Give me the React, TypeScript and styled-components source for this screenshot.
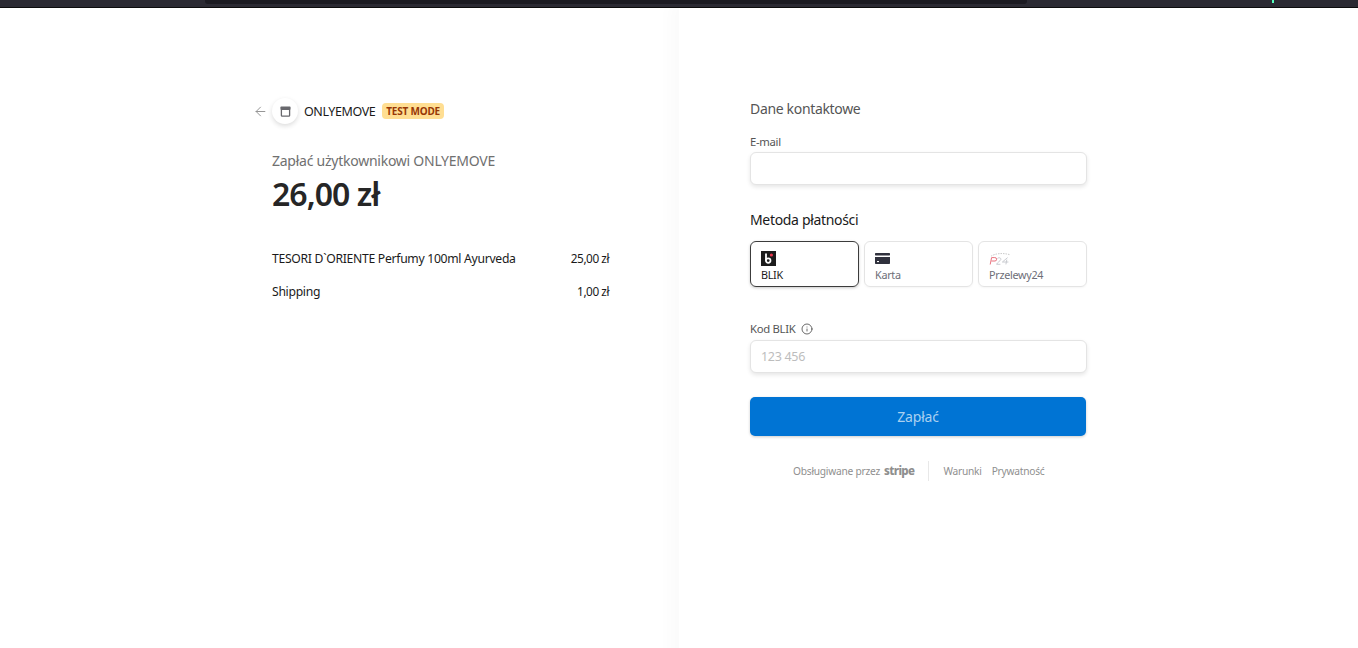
import styled, { createGlobalStyle } from "styled-components";
import { ArrowLeft, Info } from "lucide-react";

const GlobalStyle = createGlobalStyle`
    html, body {
        margin: 0;
        height: 100%;
        background: #fff;
        overflow: hidden;
    }
    * {
        box-sizing: border-box;
    }
    body {
        font-family: "Noto Sans", "Open Sans", sans-serif;
        color: #1a1a1a;
    }
`;

const Page = styled.div`
    width: 1358px;
    height: 648px;
    display: flex;
    flex-direction: column;
`;

const BrowserBar = styled.div`
    height: 8px;
    flex: none;
    background: #2b2a33;
    border-bottom: 1px solid #0c0c0d;
    display: flex;
    padding-left: 205px;
`;

const BrowserTab = styled.div`
    width: 822px;
    height: 4px;
    background: #1c1b22;
    border-radius: 0 0 3px 3px;
`;

const BrowserMark = styled.div`
    width: 2px;
    height: 3px;
    margin-left: 245px;
    background: #54ffbd;
`;

const Checkout = styled.main`
    flex: 1;
    display: grid;
    grid-template-columns: 679px 1fr;
    overflow: hidden;
`;

const Summary = styled.section`
    padding: 89px 0 0 254px;
`;

const Header = styled.header`
    display: flex;
    align-items: center;
    height: 28px;
`;

const BackIcon = styled(ArrowLeft)`
    width: 15px;
    height: 15px;
    margin-left: -1px;
    margin-right: 4px;
    color: #8f8f8f;
`;

const StoreBadge = styled.div`
    width: 26px;
    height: 26px;
    border-radius: 50%;
    background: #fff;
    box-shadow: 0 2px 5px rgba(0, 0, 0, 0.14);
    display: flex;
    align-items: center;
    justify-content: center;
    margin-right: 6px;
`;

const Merchant = styled.span`
    font-size: 12.5px;
    letter-spacing: -0.4px;
    color: #1a1a1a;
`;

const TestBadge = styled.span`
    margin-left: 7px;
    height: 16px;
    padding: 0 4px;
    border-radius: 4px;
    background: #ffde92;
    color: #983705;
    font-size: 10px;
    font-weight: 700;
    line-height: 16px;
    letter-spacing: -0.2px;
`;

const SummaryBody = styled.div`
    padding-left: 18px;
    width: 355px;
`;

const PayTo = styled.div`
    margin-top: 26px;
    font-size: 14px;
    line-height: 20px;
    letter-spacing: -0.25px;
    color: #707070;
`;

const Amount = styled.div`
    margin-top: 3px;
    font-size: 32px;
    font-weight: 600;
    line-height: 40px;
    letter-spacing: -0.95px;
    color: #262626;
`;

const Items = styled.ul`
    list-style: none;
    margin: 35px 0 0;
    padding: 0;
    display: flex;
    flex-direction: column;
    gap: 13px;
`;

const Item = styled.li`
    display: flex;
    justify-content: space-between;
    font-size: 12.2px;
    line-height: 20px;
    letter-spacing: -0.3px;
    color: #1a1a1a;
`;

const Price = styled.span`
    font-size: 11.8px;
    line-height: 19px;
    letter-spacing: -0.45px;
`;

const FormPane = styled.section`
    margin: -6px 0 -30px;
    padding: 97px 0 0 71px;
    background: #fff;
    box-shadow: -8px 0 16px rgba(0, 0, 0, 0.022);
`;

const Form = styled.form`
    width: 337px;
`;

const Heading = styled.h2<{ $dark?: boolean }>`
    margin: 0;
    font-size: 14px;
    font-weight: 400;
    line-height: 20px;
    letter-spacing: -0.33px;
    color: ${(p) => (p.$dark ? "#1a1a1a" : "#555")};
`;

const Label = styled.label`
    display: flex;
    align-items: center;
    gap: 6px;
    font-size: 11.3px;
    line-height: 16px;
    letter-spacing: -0.3px;
    color: #555;
`;

const ContactLabel = styled(Label)`
    margin-top: 15px;
`;

const Field = styled.div`
    margin-top: 2px;
    height: 33px;
    padding: 0 10px;
    border: 1px solid #e4e4e4;
    border-radius: 6px;
    background: #fff;
    box-shadow: 0 2px 4px rgba(0, 0, 0, 0.1);
    display: flex;
    align-items: center;
    font-size: 12.5px;
    letter-spacing: -0.3px;
    color: #bdbdbd;
`;

const MethodHeading = styled(Heading)`
    margin-top: 25px;
`;

const Methods = styled.div`
    margin-top: 11px;
    display: grid;
    grid-template-columns: repeat(3, 109px);
    gap: 5px;
`;

const Method = styled.div<{ $active?: boolean }>`
    height: 46px;
    padding: 9px 10px 0;
    border-radius: 6px;
    border: 1px solid ${(p) => (p.$active ? "#3c3c3c" : "#e4e4e4")};
    box-shadow: ${(p) => (p.$active ? "0 1px 3px rgba(0, 0, 0, 0.22)" : "0 1px 2px rgba(0, 0, 0, 0.04)")};
    font-size: 10.8px;
    line-height: 15px;
    letter-spacing: -0.3px;
    color: ${(p) => (p.$active ? "#1a1a1a" : "#6d6e78")};
    svg {
        display: block;
        margin-bottom: 1px;
    }
`;

const BlikLabel = styled(Label)`
    margin-top: 34px;
`;

const BlikField = styled(Field)`
    margin-top: 3px;
`;

const InfoIcon = styled(Info)`
    width: 12px;
    height: 12px;
    color: #444;
`;

const PayButton = styled.button`
    display: block;
    width: 336px;
    height: 39px;
    margin-top: 24px;
    border: 0;
    border-radius: 5px;
    background: #0074d4;
    box-shadow: 0 1px 3px rgba(0, 0, 0, 0.2);
    color: #a9d0f0;
    font-family: inherit;
    font-size: 14px;
    letter-spacing: -0.2px;
`;

const Footer = styled.footer`
    margin-top: 25px;
    padding-left: 43px;
    display: flex;
    align-items: center;
    font-size: 10.2px;
    letter-spacing: -0.24px;
    color: #8f8f8f;
`;

const Powered = styled.span`
    display: flex;
    align-items: baseline;
    gap: 4px;
    padding-right: 14px;
    border-right: 1px solid #e8e8e8;
    height: 20px;
    line-height: 20px;
`;

const StripeWord = styled.strong`
    font-size: 11.5px;
    font-weight: 800;
    letter-spacing: -0.6px;
    color: #8f8f8f;
`;

const FooterLink = styled.a`
    margin-left: 10px;
    &:first-of-type {
        margin-left: 14px;
    }
`;

const StoreLogo = () => (
    <svg width="11" height="11" viewBox="0 0 11 11">
        <rect x="0.4" y="0.6" width="10.2" height="3.4" rx="0.8" fill="#68686d" />
        <path d="M1.4 4v5.4a.8.8 0 0 0 .8.8h6.600a.8.8 0 0 0 .8-.8V4" fill="none" stroke="#68686d" strokeWidth="1.300" />
    </svg>
);

const BlikLogo = () => (
    <svg width="15" height="15" viewBox="0 0 15 15">
        <rect width="15" height="15" fill="#1c1c1c" />
        <circle cx="10.4" cy="4" r="1.6" fill="#e8374d" />
        <path d="M5 2.6v7.2" stroke="#fff" strokeWidth="1.8" />
        <circle cx="7.2" cy="9.6" r="2.3" fill="none" stroke="#fff" strokeWidth="1.7" />
    </svg>
);

const CardLogo = () => (
    <svg width="15" height="15" viewBox="0 0 15 15">
        <rect y="2" width="15" height="2.4" rx="0.6" fill="#30313d" />
        <path d="M0 6h15v6.2a.8.8 0 0 1-.8.8H.8a.8.8 0 0 1-.8-.8z" fill="#30313d" />
        <rect x="2" y="10" width="2" height="1.1" fill="#fff" />
    </svg>
);

const P24Logo = () => (
    <svg width="22" height="15" viewBox="0 0 22 15">
        <path d="M2 5.2C6 2.6 13 1.600 20.500 3.600" fill="none" stroke="#bcbcbc" strokeWidth="0.8" strokeDasharray="1.5 1" />
        <path d="M1.200 13.500 2.600 6.600h3.200a1.700 1.700 0 0 1 .2 3.400H2.400" fill="none" stroke="#e9737f" strokeWidth="1" />
        <path d="M8.400 7.600c1-1.400 4-1 3.400 1-.4 1.400-3.400 2.600-4.200 4.700h3.800" fill="none" stroke="#c4c6cc" strokeWidth="0.9" />
        <path d="M18.600 6.600 13.400 11h6M17.800 8.600l-.9 4.800" fill="none" stroke="#c4c6cc" strokeWidth="0.9" />
    </svg>
);

const App: React.FC = () => {
    return (
        <Page>
            <GlobalStyle />
            <BrowserBar>
                <BrowserTab />
                <BrowserMark />
            </BrowserBar>
            <Checkout>
                <Summary>
                    <Header>
                        <BackIcon strokeWidth={1.5} />
                        <StoreBadge>
                            <StoreLogo />
                        </StoreBadge>
                        <Merchant>ONLYEMOVE</Merchant>
                        <TestBadge>TEST MODE</TestBadge>
                    </Header>
                    <SummaryBody>
                        <PayTo>Zapłać użytkownikowi ONLYEMOVE</PayTo>
                        <Amount>26,00 zł</Amount>
                        <Items>
                            <Item>
                                <span>TESORI D`ORIENTE Perfumy 100ml Ayurveda</span>
                                <Price>25,00 zł</Price>
                            </Item>
                            <Item>
                                <span>Shipping</span>
                                <Price>1,00 zł</Price>
                            </Item>
                        </Items>
                    </SummaryBody>
                </Summary>
                <FormPane>
                    <Form>
                        <Heading>Dane kontaktowe</Heading>
                        <ContactLabel>E-mail</ContactLabel>
                        <Field />
                        <MethodHeading $dark>Metoda płatności</MethodHeading>
                        <Methods>
                            <Method $active>
                                <BlikLogo />
                                BLIK
                            </Method>
                            <Method>
                                <CardLogo />
                                Karta
                            </Method>
                            <Method>
                                <P24Logo />
                                Przelewy24
                            </Method>
                        </Methods>
                        <BlikLabel>
                            Kod BLIK
                            <InfoIcon strokeWidth={1.6} />
                        </BlikLabel>
                        <BlikField>123 456</BlikField>
                        <PayButton type="button">Zapłać</PayButton>
                        <Footer>
                            <Powered>
                                Obsługiwane przez <StripeWord>stripe</StripeWord>
                            </Powered>
                            <FooterLink>Warunki</FooterLink>
                            <FooterLink>Prywatność</FooterLink>
                        </Footer>
                    </Form>
                </FormPane>
            </Checkout>
        </Page>
    );
};

export default App;
